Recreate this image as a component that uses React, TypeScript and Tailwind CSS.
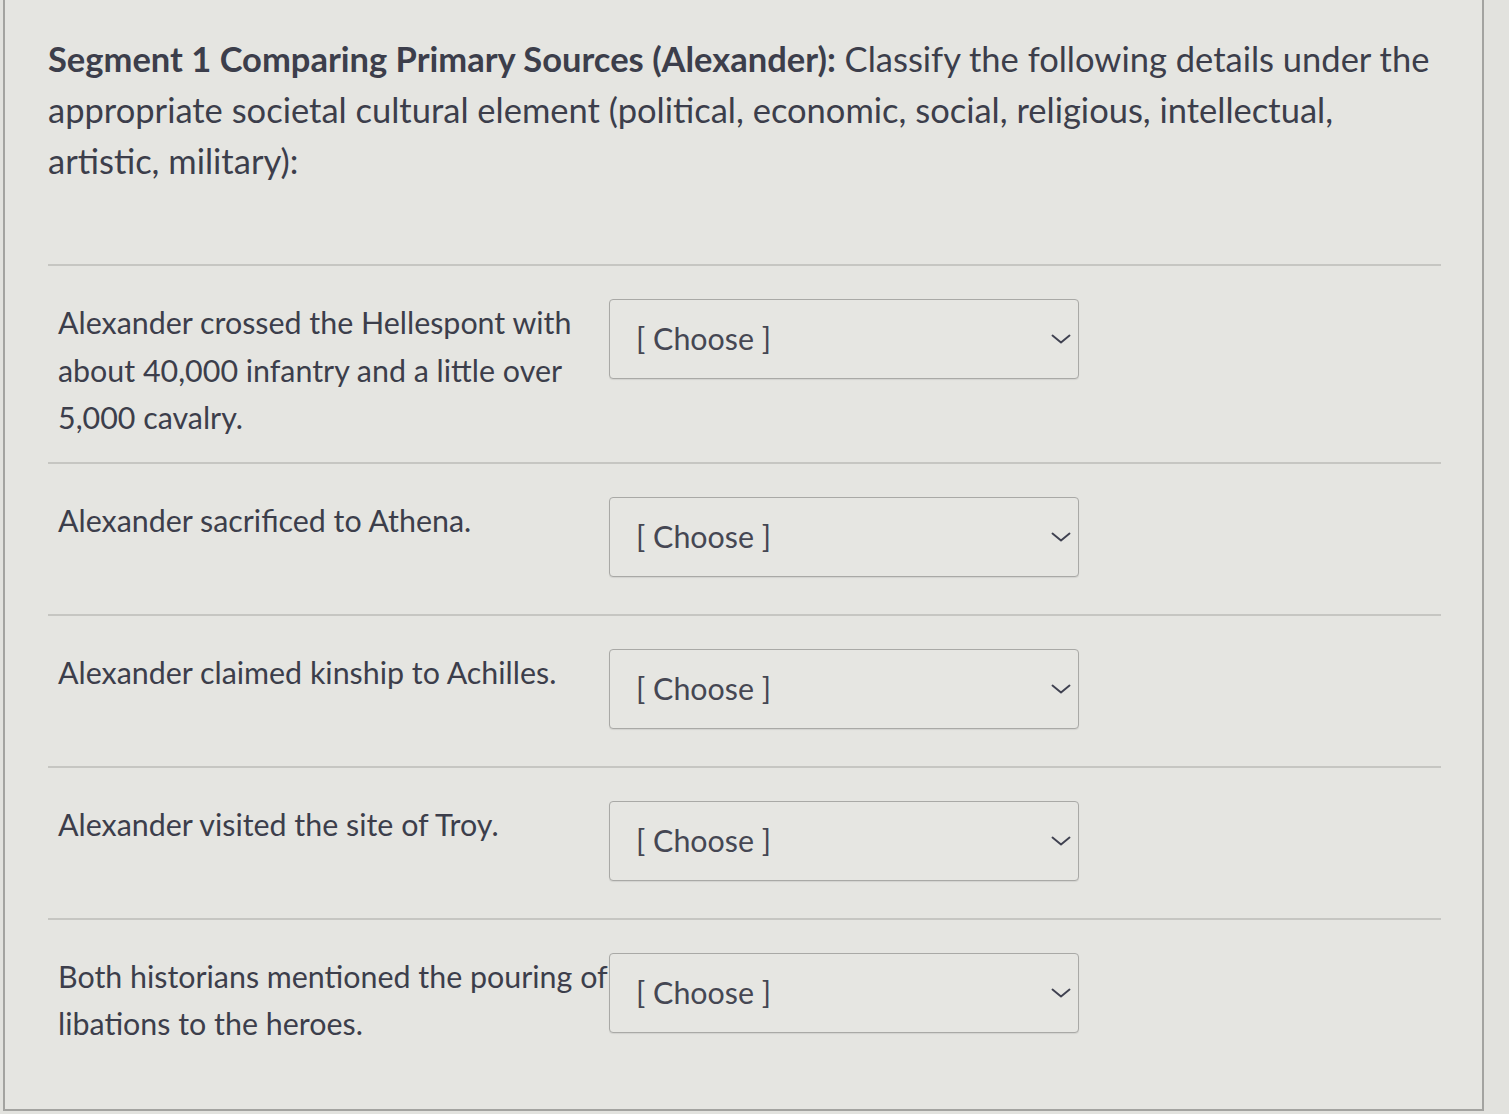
import React from 'react';

const rows = [
  { text: 'Alexander crossed the Hellespont with about 40,000 infantry and a little over 5,000 cavalry.', pad: 'pb-[20px]' },
  { text: 'Alexander sacrificed to Athena.', pad: 'pb-[37px]' },
  { text: 'Alexander claimed kinship to Achilles.', pad: 'pb-[37px]' },
  { text: 'Alexander visited the site of Troy.', pad: 'pb-[37px]' },
  { text: 'Both historians mentioned the pouring of libations to the heroes.', pad: 'pb-[37px]' },
];

const ChooseSelect: React.FC = () => (
  <div className="w-[470px] h-[80px] shrink-0 flex items-center justify-between pl-[26px] pr-[5px] border border-[#a9a9a6] rounded-[4px] bg-[#e6e6e2] shadow-[0_1px_1px_rgba(0,0,0,0.08)]">
    <span className="text-[30.4px] text-[#454753]">[ Choose ]</span>
    <svg width="24" height="24" viewBox="0 0 24 24" fill="none" stroke="#3f4150" strokeWidth="1.9" strokeLinecap="round" strokeLinejoin="round">
      <path d="M3.5 8.5 12 15.5l8.5-7" />
    </svg>
  </div>
);

export default function App() {
  return (
    <div className="w-[1509px] h-[1114px] bg-[#e2e2de] font-['Lato','Open_Sans',sans-serif] text-[#3c3e4b] overflow-hidden">
      <div className="ml-[3px] w-[1481px] h-[1111px] bg-[#e5e5e1] border-l-2 border-r-2 border-b-2 border-[#a3a3a0] pl-[43px] pr-[41px]">
        <p className="pt-[33px] text-[34.5px] leading-[51px]">
          <span className="font-bold">Segment 1 Comparing Primary Sources (Alexander):</span> Classify the following
          details under the appropriate societal cultural element (political, economic, social, religious, intellectual,
          artistic, military):
        </p>
        <div className="mt-[78px]">
          {rows.map((r, i) => (
            <div key={i} className={`border-t-2 border-[#c6c6c2] flex items-start pt-[33px] pl-[10px] ${r.pad}`}>
              <div className="w-[551px] shrink-0 text-[30.4px] leading-[47.5px]">{r.text}</div>
              <ChooseSelect />
            </div>
          ))}
        </div>
      </div>
    </div>
  );
}
